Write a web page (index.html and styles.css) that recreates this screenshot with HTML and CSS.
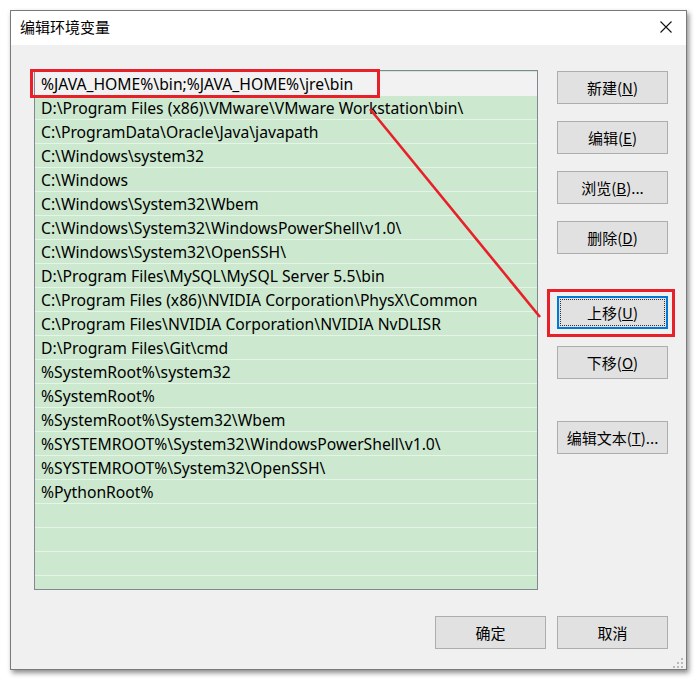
FILE: index.html
```html
<!DOCTYPE html>
<html lang="zh-CN">
<head>
  <meta charset="UTF-8">
  <title>编辑环境变量</title>
  <link rel="stylesheet" href="styles.css">
</head>
<body>
  <div class="window">
    <div class="titlebar">
      <span class="title">编辑环境变量</span>
      <svg class="close" width="12" height="12" viewBox="0 0 12 12">
        <path d="M0.5 0.5 L11.5 11.5 M11.5 0.5 L0.5 11.5" stroke="#111" stroke-width="1.1" fill="none"/>
      </svg>
    </div>
    <div class="content">
      <div class="main">
        <div class="list-wrap">
          <div class="list">
            <div class="row editing">%JAVA_HOME%\bin;%JAVA_HOME%\jre\bin</div>
            <div class="row">D:\Program Files (x86)\VMware\VMware Workstation\bin\</div>
            <div class="row">C:\ProgramData\Oracle\Java\javapath</div>
            <div class="row">C:\Windows\system32</div>
            <div class="row">C:\Windows</div>
            <div class="row">C:\Windows\System32\Wbem</div>
            <div class="row">C:\Windows\System32\WindowsPowerShell\v1.0\</div>
            <div class="row">C:\Windows\System32\OpenSSH\</div>
            <div class="row">D:\Program Files\MySQL\MySQL Server 5.5\bin</div>
            <div class="row">C:\Program Files (x86)\NVIDIA Corporation\PhysX\Common</div>
            <div class="row">C:\Program Files\NVIDIA Corporation\NVIDIA NvDLISR</div>
            <div class="row">D:\Program Files\Git\cmd</div>
            <div class="row">%SystemRoot%\system32</div>
            <div class="row">%SystemRoot%</div>
            <div class="row">%SystemRoot%\System32\Wbem</div>
            <div class="row">%SYSTEMROOT%\System32\WindowsPowerShell\v1.0\</div>
            <div class="row">%SYSTEMROOT%\System32\OpenSSH\</div>
            <div class="row">%PythonRoot%</div>
            <div class="row"></div>
            <div class="row"></div>
            <div class="row"></div>
            <div class="row"></div>
          </div>
          <div class="mark mark-row"></div>
        </div>
        <div class="side">
          <button class="btn">新建(<u>N</u>)</button>
          <button class="btn">编辑(<u>E</u>)</button>
          <button class="btn">浏览(<u>B</u>)...</button>
          <button class="btn">删除(<u>D</u>)</button>
          <button class="btn focused gap">上移(<u>U</u>)<span class="mark mark-btn"></span></button>
          <button class="btn">下移(<u>O</u>)</button>
          <button class="btn gap">编辑文本(<u>T</u>)...</button>
        </div>
      </div>
      <div class="footer">
        <button class="btn">确定</button>
        <button class="btn">取消</button>
      </div>
    </div>
    <svg class="arrow" width="677" height="660">
      <line x1="360" y1="99" x2="530" y2="307" stroke="#e8202a" stroke-width="2.6"/>
    </svg>
    <svg class="grip" width="12" height="12" viewBox="0 0 12 12">
      <rect x="9" y="1" width="2" height="2" fill="#b9b9b9"/>
      <rect x="5" y="5" width="2" height="2" fill="#b9b9b9"/>
      <rect x="9" y="5" width="2" height="2" fill="#b9b9b9"/>
      <rect x="1" y="9" width="2" height="2" fill="#b9b9b9"/>
      <rect x="5" y="9" width="2" height="2" fill="#b9b9b9"/>
      <rect x="9" y="9" width="2" height="2" fill="#b9b9b9"/>
    </svg>
  </div>
</body>
</html>
```

FILE: styles.css
```css
body {
  margin: 0;
  padding: 10px;
  background-color: #fff;
  font-family: "Noto Sans", "Noto Sans CJK SC", sans-serif;
  color: #000;
}
.window {
  position: relative;
  width: 677px;
  height: 660px;
  box-sizing: border-box;
  border: 1px solid #7a7a7a;
  background-color: #f0f0f0;
  box-shadow: 2px 3px 5px rgba(0, 0, 0, 0.45);
  display: flex;
  flex-direction: column;
}
.titlebar {
  height: 34px;
  box-sizing: border-box;
  background-color: #fff;
  display: flex;
  justify-content: space-between;
  align-items: center;
  padding: 0 14px 3px 9px;
}
.title {
  font-family: "Noto Sans CJK SC", sans-serif;
  font-size: 15px;
}
.content {
  flex: 1;
  display: flex;
  flex-direction: column;
  justify-content: space-between;
  padding: 25px 18px 20px 23px;
}
.main {
  display: flex;
  gap: 19px;
}
.list-wrap {
  position: relative;
}
.list {
  width: 504px;
  height: 520px;
  box-sizing: border-box;
  border: 1px solid #828790;
  background-color: #cce8cf;
  padding-top: 1px;
  overflow: hidden;
}
.row {
  height: 24px;
  box-sizing: border-box;
  border-bottom: 1px solid #e6f3e8;
  padding: 2px 0 0 6px;
  font-size: 15.7px;
  line-height: 21px;
  white-space: nowrap;
}
.row.editing {
  background-color: #f2f2f2;
  border-bottom-color: #f2f2f2;
}
.mark {
  position: absolute;
  box-sizing: border-box;
  border: 3px solid #e8202a;
}
.mark-row {
  left: -4px;
  top: -1px;
  width: 350px;
  height: 29px;
}
.side {
  display: flex;
  flex-direction: column;
  gap: 17px;
  padding-top: 1px;
}
.btn {
  position: relative;
  width: 111px;
  height: 33px;
  box-sizing: border-box;
  border: 1px solid #adadad;
  background-color: #e1e1e1;
  font-family: "Noto Sans CJK SC", sans-serif;
  font-size: 15px;
  color: #000;
  padding: 0;
}
.btn.gap {
  margin-top: 25px;
}
.btn.focused {
  border: 2px solid #0078d7;
}
.btn.focused::after {
  content: "";
  position: absolute;
  left: 1px;
  top: 1px;
  right: 1px;
  bottom: 1px;
  border: 1px dotted #333;
}
.mark-btn {
  left: -12px;
  top: -9px;
  width: 128px;
  height: 48px;
}
.footer {
  display: flex;
  justify-content: flex-end;
  gap: 11px;
}
.arrow {
  position: absolute;
  left: -1px;
  top: -1px;
  pointer-events: none;
}
.grip {
  position: absolute;
  right: 2px;
  bottom: 0;
}
```
